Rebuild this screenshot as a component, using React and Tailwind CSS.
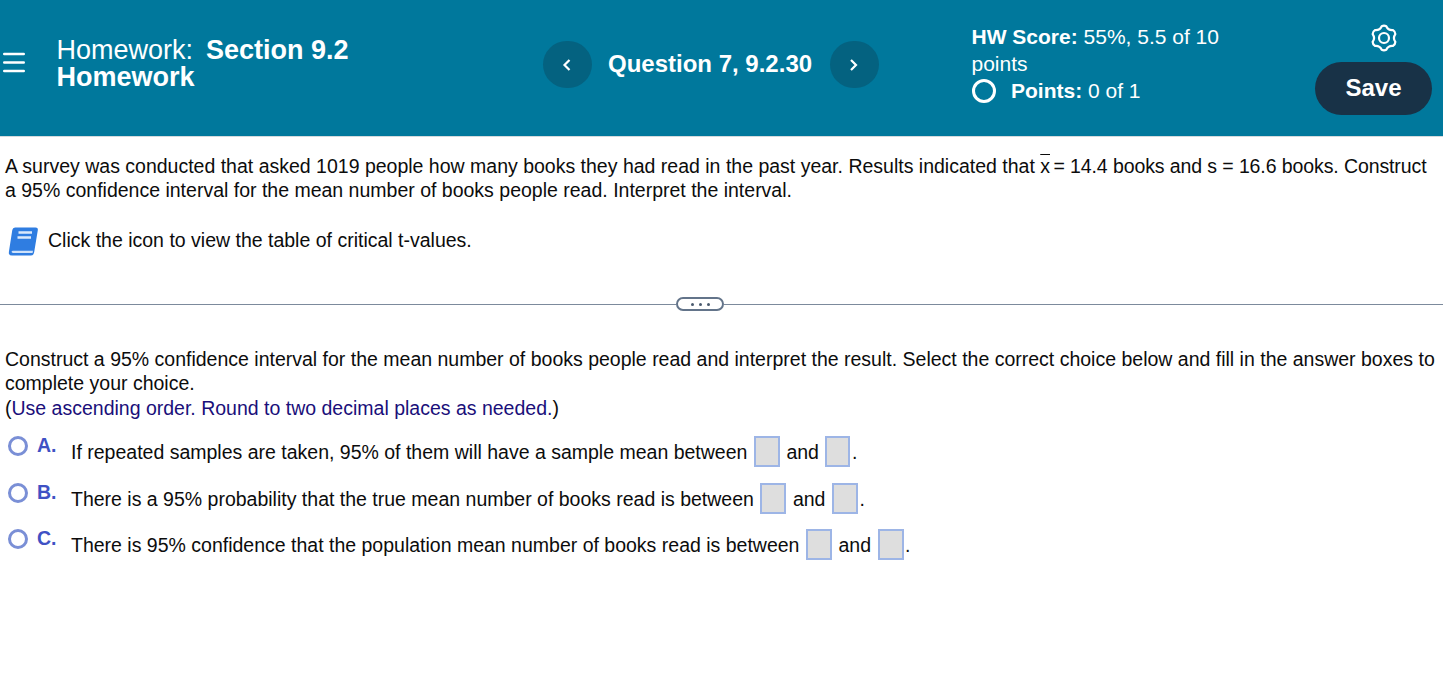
import React from "react";

function AnswerBox({ w = "w-[26px]", last = false }) {
  return (
    <span
      className={`inline-block ${w} h-[31px] ml-[6.5px] ${last ? "mr-[1.5px]" : "mr-[6.5px]"} align-[-8px] bg-[#dedede] border-2 border-[#9db5e6]`}
    />
  );
}

function Choice({ letter, text, boxes }) {
  return (
    <div className="flex items-start h-[46.5px]">
      <span className="w-[20px] h-[20px] ml-[8px] mt-[2px] rounded-full border-[3px] border-[#7a8fd6] bg-white shrink-0" />
      <span className="w-[43px] pl-[9px] text-[#3f51c4] font-bold leading-[24px] shrink-0 -mt-[1px]">{letter}</span>
      <span className="leading-[30px] mt-[2px] whitespace-nowrap">
        {text}
        <AnswerBox w={boxes[0]} />
        and
        <AnswerBox w={boxes[1]} last />.
      </span>
    </div>
  );
}

export default function App() {
  return (
    <div className="min-h-[673px] bg-white text-[19.5px] text-[#0c0c0c] font-['Liberation_Sans',Arial,sans-serif]">
      <header className="h-[136px] bg-[#00789c] text-white flex border-b border-[#d4dadd] box-content -mb-px">
        <div className="w-[56.5px] shrink-0 pl-[3px] pt-[52px]">
          <svg width="22" height="22" viewBox="0 0 22 22" fill="none" stroke="white" strokeWidth="2.4" strokeLinecap="round">
            <path d="M1.2 2h19.6M1.2 10.5h19.6M1.2 19h19.6" />
          </svg>
        </div>
        <div className="w-[486.5px] shrink-0 pt-[37px] text-[27px] leading-[27px]">
          Homework:<b className="ml-[13px]">Section 9.2</b>
          <br />
          <b>Homework</b>
        </div>
        <div className="w-[428.5px] shrink-0 flex items-start pt-[41px]">
          <button className="w-[49px] h-[47px] rounded-full bg-[#046280] flex items-center justify-center">
            <svg width="12" height="14" viewBox="0 0 12 14" fill="none" stroke="white" strokeWidth="2.2">
              <path d="M7.5 2 2.5 7l5 5" />
            </svg>
          </button>
          <b className="text-[24px] leading-[45px] whitespace-nowrap ml-[16px] mr-[18px]">Question 7, 9.2.30</b>
          <button className="w-[49px] h-[47px] rounded-full bg-[#046280] flex items-center justify-center">
            <svg width="12" height="14" viewBox="0 0 12 14" fill="none" stroke="white" strokeWidth="2.2">
              <path d="M2 2 7 7l-5 5" />
            </svg>
          </button>
        </div>
        <div className="w-[343.5px] shrink-0 pt-[23px] text-[21px] leading-[27px]">
          <div className="w-[260px]">
            <b>HW Score:</b> 55%, 5.5 of 10 points
          </div>
          <div className="flex items-center">
            <span className="w-[24px] h-[24px] rounded-full border-[3px] border-white mr-[15px] ml-[0.5px]" />
            <span>
              <b>Points:</b> 0 of 1
            </span>
          </div>
        </div>
        <div className="flex flex-col items-center pt-[24px]">
          <svg width="28" height="28" viewBox="-1 -1 28 28" fill="none" stroke="white" strokeWidth="2.2" strokeLinejoin="round" className="ml-[20px]">
            <path d="M10.71 1.22Q13 0 15.29 1.22Q17.25 5.64 22.06 5.13Q24.26 6.5 24.35 9.09Q21.5 13 24.35 16.91Q24.26 19.5 22.06 20.87Q17.25 20.36 15.29 24.78Q13 26 10.71 24.78Q8.75 20.36 3.94 20.87Q1.74 19.5 1.65 16.91Q4.5 13 1.65 9.09Q1.74 6.5 3.94 5.13Q8.75 5.64 10.71 1.22Z" />
            <circle cx="13" cy="13" r="5" />
          </svg>
          <button className="mt-[10px] w-[117px] h-[53px] rounded-full bg-[#183247] text-[24px] font-bold pb-[2px]">Save</button>
        </div>
      </header>

      <main>
        <p className="pt-[18px] pl-[5px] pr-[12px] leading-[24px]">
          A survey was conducted that asked 1019 people how many books they had read in the past year. Results indicated that{" "}
          <span className="overline decoration-1 mr-[-2px]">x</span>{" "}
          <span className="tracking-[-0.1px]">= 14.4 books and s = 16.6 books. Construct</span> a 95% confidence interval for the mean number of books people read. Interpret the interval.
        </p>
        <div className="flex items-center mt-[23px] pl-[8px] h-[32px]">
          <svg width="31" height="31" viewBox="0 0 31 31" className="mr-[9px]">
            <path d="M7 1.5H27.5q2.8 0 2.3 2.8L26.2 26q-.6 3.5-3.4 3.5H4q-3.8 0-3.1-3.8L4.3 4q.4-2.5 2.7-2.5Z" fill="#2f7de1" />
            <path d="M5 24.8H25l-.4 2.1H5q-1.4 0-1.4-1.05T5 24.8Z" fill="#cfe2fa" />
            <path d="M10.5 6.5h13.5M9.5 11.5h13.5" stroke="#dbe9fb" strokeWidth="2.4" />
          </svg>
          <span>Click the icon to view the table of critical t-values.</span>
        </div>

        <div className="flex items-center mt-[40px] h-[14px]">
          <div className="h-px w-[676px] bg-[#7c8a9c]" />
          <div className="w-[48px] h-[14px] rounded-full border-2 border-[#63748a] flex items-center justify-center gap-[5px] shrink-0">
            <span className="w-[3px] h-[3px] rounded-full bg-[#4a5a6e]" />
            <span className="w-[3px] h-[3px] rounded-full bg-[#4a5a6e]" />
            <span className="w-[3px] h-[3px] rounded-full bg-[#4a5a6e]" />
          </div>
          <div className="h-px flex-1 bg-[#7c8a9c]" />
        </div>

        <div className="pt-[36px] pl-[5px] leading-[24.4px]">
          <p>
            Construct a 95% confidence interval for the mean number of books people read and interpret the result. Select the correct choice below and fill in the answer boxes to complete your choice.
          </p>
          <p className="text-[#1a0f7a]">
            <span className="text-[#0c0c0c]">(</span>Use ascending order. Round to two decimal places as needed.<span className="text-[#0c0c0c]">)</span>
          </p>
        </div>

        <div className="mt-[14px]">
          <Choice letter="A." text="If repeated samples are taken, 95% of them will have a sample mean between" boxes={["w-[26px]", "w-[25px]"]} />
          <Choice letter="B." text="There is a 95% probability that the true mean number of books read is between" boxes={["w-[26px]", "w-[26px]"]} />
          <Choice letter="C." text="There is 95% confidence that the population mean number of books read is between" boxes={["w-[26px]", "w-[26px]"]} />
        </div>
      </main>
    </div>
  );
}
